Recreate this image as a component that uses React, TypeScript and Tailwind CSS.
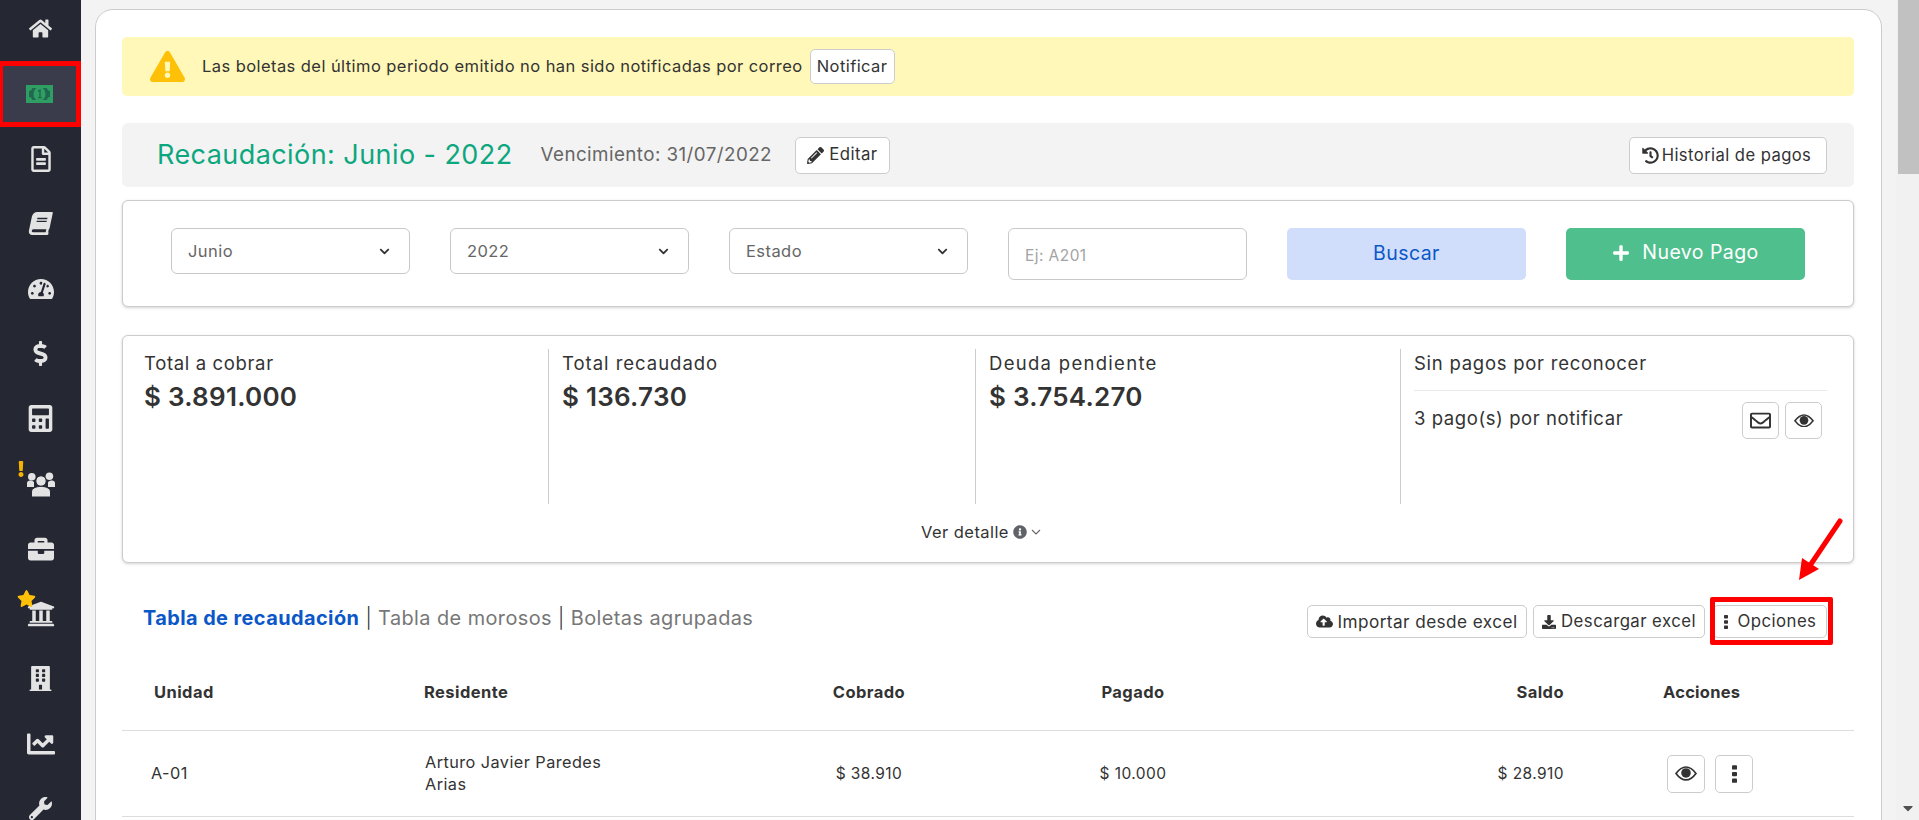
import {
  FaHome, FaRegFileAlt, FaBook, FaTachometerAlt, FaDollarSign, FaCalculator,
  FaBriefcase, FaUniversity, FaBuilding, FaChartLine, FaWrench, FaExclamationTriangle, FaExclamation,
  FaStar, FaPencilAlt, FaHistory, FaPlus, FaChevronDown, FaInfoCircle, FaRegEnvelope,
  FaCloudUploadAlt, FaDownload, FaCaretDown,
} from "react-icons/fa";
import type { ReactNode } from "react";

const navIcon = "text-[#e3e3e3]";

function NavRow({ children, first }: { children: ReactNode; first?: boolean }) {
  return (
    <div className={first ? "relative flex h-[61px] shrink-0 items-center justify-center pb-[5px]" : "relative flex h-[65px] shrink-0 items-center justify-center"}>
      {children}
    </div>
  );
}

/* three overlapping people, the package one has no round heads */
function PeopleIcon() {
  return (
    <svg width="28" height="26" viewBox="0 0 28 26">
      <g fill="#e3e3e3">
        <circle cx="4.8" cy="5.7" r="3.8" />
        <circle cx="22.4" cy="5.2" r="3.8" />
        <path d="M0 16 V12 C0 10 2 9.5 4 9.5 C5 9.5 6 10 7 11 V16 Z" />
        <path d="M21 11 C22 10 23 9.5 24 9.5 C26 9.5 28 10 28 12 V16 H21 Z" />
        <path d="M4.5 26 V21 C4.5 17.2 9 15.4 14 15.4 C19 15.4 23.5 17.2 23.5 21 V26 Z" stroke="#252733" strokeWidth="1" />
        <circle cx="14" cy="10" r="5.2" stroke="#252733" strokeWidth="1" />
      </g>
    </svg>
  );
}

function MoneyIcon() {
  return (
    <svg width="27" height="18" viewBox="0 0 27 18">
      <rect width="27" height="18" fill="#2f9e62" />
      <path d="M6 3 H21 C21 5 22.5 6 24 6 V12 C22.5 12 21 13 21 15 H6 C6 13 4.5 12 3 12 V6 C4.5 6 6 5 6 3 Z" fill="#20684f" />
      <ellipse cx="13.5" cy="9" rx="6" ry="7" fill="#2f9e62" />
      <path d="M12 6.4 L14 5.2 V12.4 M12 12.6 H15.8" stroke="#20684f" strokeWidth="1.4" fill="none" />
    </svg>
  );
}

function EyeIcon({ w }: { w: number }) {
  return (
    <svg width={w} height={w * 0.68} viewBox="0 0 22 15">
      <path d="M1 7.5 C5 2 8 1 11 1 C14 1 17 2 21 7.5 C17 13 14 14 11 14 C8 14 5 13 1 7.5 Z" fill="none" stroke="#333333" strokeWidth="1.7" />
      <circle cx="11" cy="7" r="4.8" fill="#333333" />
    </svg>
  );
}

function DotsIcon({ w, h }: { w: number; h: number }) {
  return (
    <svg width={w} height={h} viewBox="0 0 4 14" fill="#333333">
      <rect width="4" height="3.4" rx="0.7" />
      <rect y="5.3" width="4" height="3.4" rx="0.7" />
      <rect y="10.6" width="4" height="3.4" rx="0.7" />
    </svg>
  );
}

function Sidebar() {
  return (
    <aside className="flex h-[820px] w-[81px] shrink-0 flex-col overflow-hidden bg-[#252733]">
      <NavRow first><FaHome size={23} className={navIcon} /></NavRow>
      <div className="mb-[-1px] flex h-[66px] shrink-0 items-center justify-center border-[5px] border-l-[3px] border-[#ff0000] bg-[#3a3c4b]">
        <MoneyIcon />
      </div>
      <NavRow><FaRegFileAlt size={26} className={navIcon} /></NavRow>
      <NavRow><FaBook size={23} className={`${navIcon} -skew-x-12`} /></NavRow>
      <NavRow><FaTachometerAlt size={26} className={navIcon} /></NavRow>
      <NavRow><FaDollarSign size={25} className={navIcon} /></NavRow>
      <NavRow><FaCalculator size={27} className={navIcon} /></NavRow>
      <NavRow>
        <FaExclamation size={16} className="absolute left-[13px] top-[10px] text-[#f5b400]" />
        <PeopleIcon />
      </NavRow>
      <NavRow><FaBriefcase size={26} className={navIcon} /></NavRow>
      <NavRow>
        <FaStar size={19} className="absolute left-[17px] top-[8px] z-10 text-[#ffc107]" />
        <FaUniversity size={28} className={navIcon} />
      </NavRow>
      <NavRow><FaBuilding size={25} className={navIcon} /></NavRow>
      <NavRow><FaChartLine size={28} className={navIcon} /></NavRow>
      <NavRow><FaWrench size={23} className={navIcon} /></NavRow>
    </aside>
  );
}

function SmallBtn({ children, className = "" }: { children: ReactNode; className?: string }) {
  return (
    <button className={`flex items-center justify-center rounded-[5px] border border-[#cccccc] bg-white text-[#333333] ${className}`}>
      {children}
    </button>
  );
}

function Select({ label }: { label: string }) {
  return (
    <div className="flex h-[46px] items-center justify-between rounded-[6px] border border-[#c9c9c9] bg-white pl-[16px] pr-[19px] text-[16.5px] text-[#666666]">
      <span>{label}</span>
      <FaChevronDown size={11} className="text-[#333333]" />
    </div>
  );
}

function Stat({ label, value, className, track }: { label: string; value: string; className: string; track: string }) {
  return (
    <div className={`h-[155px] border-r border-[#cccccc] ${className}`}>
      <div className={`mt-[1px] text-[18.5px] leading-[26px] text-[#333333] ${track}`}>{label}</div>
      <div className="mt-[4px] text-[26px] font-semibold leading-[34px] tracking-[0.01em] text-[#333333]">{value}</div>
    </div>
  );
}

export default function App() {
  return (
    <div className="flex h-[820px] w-[1919px] overflow-hidden bg-[#f3f3f3] font-['Inter',sans-serif] tracking-[0.027em] text-[#333333]">
      <Sidebar />

      <main className="relative flex-1 overflow-hidden pl-[14px] pt-[9px]">
        <div className="h-[900px] w-[1787px] rounded-t-[18px] border border-[#cccccc] bg-white pl-[26px] pr-[27px] pt-[27px]">
          {/* Aviso */}
          <div className="flex h-[59px] items-center rounded-[5px] bg-[#fff8b8] pl-[28px]">
            <FaExclamationTriangle size={35} className="text-[#ffc107]" />
            <span className="ml-[17px] text-[16.5px] text-[#333333]">
              Las boletas del último periodo emitido no han sido notificadas por correo
            </span>
            <SmallBtn className="ml-[7px] h-[35px] w-[85px] text-[16.5px]">Notificar</SmallBtn>
          </div>

          {/* Titulo */}
          <div className="mt-[27px] flex h-[64px] items-center rounded-[6px] bg-[#f3f3f3] pl-[35px] pr-[27px]">
            <h1 className="text-[27px] font-normal text-[#0da77f]">Recaudación: Junio - 2022</h1>
            <span className="ml-[28px] text-[18.8px] text-[#666666]">Vencimiento: 31/07/2022</span>
            <SmallBtn className="ml-[23px] h-[37px] w-[95px] gap-[5px] text-[16.8px]">
              <FaPencilAlt size={17} /> Editar
            </SmallBtn>
            <SmallBtn className="ml-auto h-[37px] w-[198px] gap-[3px] pr-[3px] text-[16.6px]">
              <FaHistory size={17} /> Historial de pagos
            </SmallBtn>
          </div>

          {/* Filtros */}
          <div className="mt-[13px] grid h-[107px] grid-cols-6 items-start gap-x-[40px] rounded-[6px] border border-[#cccccc] bg-white px-[48px] pt-[27px] shadow-[0_1px_3px_rgba(0,0,0,0.18)]">
            <Select label="Junio" />
            <Select label="2022" />
            <Select label="Estado" />
            <input
              placeholder="Ej: A201"
              className="h-[52px] w-full rounded-[6px] border border-[#c9c9c9] bg-white px-[16px] pt-[3px] text-[15.5px] outline-none placeholder:text-[#a3a3a3]"
            />
            <button className="h-[52px] rounded-[5px] bg-[#d0defb] pb-[1px] text-[19.5px] text-[#0b57c8]">Buscar</button>
            <button className="flex h-[52px] items-center justify-center gap-[12px] rounded-[5px] bg-[#4fc08d] pb-[3px] text-[19.5px] text-white">
              <FaPlus size={18} /> Nuevo Pago
            </button>
          </div>

          {/* Totales */}
          <div className="mt-[28px] h-[228px] rounded-[6px] border border-[#cccccc] bg-white pt-[13px] shadow-[0_1px_3px_rgba(0,0,0,0.18)]">
            <div className="flex">
              <Stat label="Total a cobrar" value="$ 3.891.000" className="w-[426px] pl-[21px]" track="tracking-[0.035em]" />
              <Stat label="Total recaudado" value="$ 136.730" className="w-[427px] pl-[13px]" track="tracking-[0.053em]" />
              <Stat label="Deuda pendiente" value="$ 3.754.270" className="w-[425px] pl-[13px]" track="tracking-[0.07em]" />
              <div className="flex-1 pl-[13px] pr-[26px]">
                <div className="mt-[1px] border-b border-[#e9e9e9] pb-[14px] text-[18.5px] leading-[26px] tracking-[0.04em]">Sin pagos por reconocer</div>
                <div className="flex items-start justify-between pr-[5px] pt-[11px]">
                  <span className="mt-[3px] text-[18.5px] leading-[26px] tracking-[0.031em]">3 pago(s) por notificar</span>
                  <div className="flex gap-[6px]">
                    <SmallBtn className="h-[37px] w-[37px]"><FaRegEnvelope size={21} /></SmallBtn>
                    <SmallBtn className="h-[37px] w-[37px]"><EyeIcon w={20} /></SmallBtn>
                  </div>
                </div>
              </div>
            </div>
            <div className="mt-[16px] flex items-center justify-center gap-[4px] pr-[14px] text-[16.5px] leading-[24px]">
              Ver detalle <FaInfoCircle size={14} className="text-[#5f6368]" />
              <svg width="10" height="6" viewBox="0 0 10 6" fill="none" stroke="#666666" strokeWidth="1.1">
                <path d="M1 1 L5 5 L9 1" />
              </svg>
            </div>
          </div>

          {/* Tabs y acciones */}
          <div className="mt-[42px] flex items-start justify-between pl-[21px] pr-[27px]">
            <div className="mt-[1px] text-[19.9px] leading-[24px] text-[#777777]">
              <span className="font-bold text-[#0b57c8]">Tabla de recaudación</span>
              <span className="font-light text-[#333333]"> | </span>Tabla de morosos<span className="font-light text-[#333333]"> | </span>Boletas agrupadas
            </div>
            <div className="flex">
              <SmallBtn className="h-[33px] w-[220px] gap-[4px] text-[17.2px]"><FaCloudUploadAlt size={17} /> Importar desde excel</SmallBtn>
              <SmallBtn className="ml-[6px] h-[33px] w-[172px] gap-[5px] text-[16.8px]"><FaDownload size={14} /> Descargar excel</SmallBtn>
              <div className="relative ml-[8px]">
                <SmallBtn className="h-[33px] w-[114px] gap-[10px] text-[16.8px]"><DotsIcon w={4} h={14} /> Opciones</SmallBtn>
                <div className="absolute -bottom-[7px] -left-[3px] -right-[6px] -top-[8px] rounded-[2px] border-[5px] border-[#ff0000]" />
              </div>
            </div>
          </div>

          {/* Tabla */}
          <div className="mt-[16px] grid h-[77px] grid-cols-[302px_300px_290px_238px_312px_1fr] items-center border-b border-[#dddddd] text-[16.5px] font-bold text-[#333333]">
            <div className="pl-[32px]">Unidad</div>
            <div>Residente</div>
            <div className="text-center">Cobrado</div>
            <div className="text-center">Pagado</div>
            <div className="text-right">Saldo</div>
            <div className="pl-[99px] tracking-[0.015em]">Acciones</div>
          </div>
          <div className="grid h-[86px] grid-cols-[302px_300px_290px_238px_312px_1fr] items-center border-b border-[#dddddd] text-[16.3px] text-[#333333]">
            <div className="pl-[29px]">A-01</div>
            <div className="mb-[2px] pl-[1px] leading-[22px]">Arturo Javier Paredes<br />Arias</div>
            <div className="text-center text-[15.5px]">$ 38.910</div>
            <div className="text-center text-[15.5px]">$ 10.000</div>
            <div className="text-right text-[15.5px]">$ 28.910</div>
            <div className="flex gap-[10px] pl-[103px]">
              <SmallBtn className="h-[38px] w-[38px]"><EyeIcon w={22} /></SmallBtn>
              <SmallBtn className="h-[38px] w-[38px]"><DotsIcon w={5} h={18} /></SmallBtn>
            </div>
          </div>
        </div>

        {/* Flecha */}
        <svg className="absolute left-[1715px] top-[515px]" width="50" height="70" viewBox="0 0 50 70">
          <line x1="44" y1="6" x2="13" y2="52" stroke="#ff0000" strokeWidth="5" strokeLinecap="round" />
          <polygon points="3,65 6,43 23,54" fill="#ff0000" />
        </svg>
      </main>

      {/* Scrollbar */}
      <div className="flex h-[820px] w-[23px] shrink-0 flex-col items-end justify-between bg-[#f1f1f1]">
        <div className="h-[174px] w-[21px] bg-[#c1c1c1]" />
        <FaCaretDown size={16} className="mb-[4px] mr-[3px] text-[#505050]" />
      </div>
    </div>
  );
}
